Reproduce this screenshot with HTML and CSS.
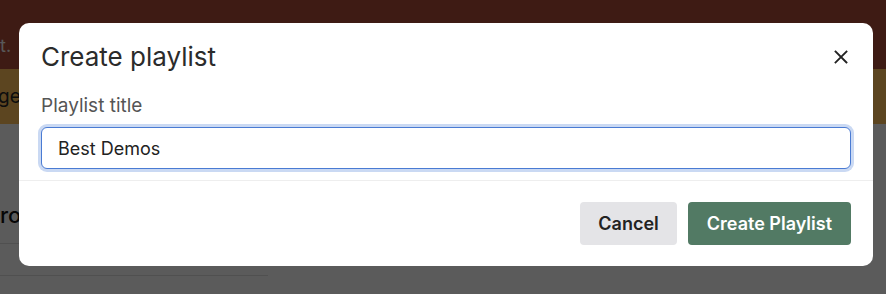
FILE: index.html
```html
<!DOCTYPE html>
<html>
<head>
    <link rel="stylesheet" href="styles.css">
</head>
<body>
    <div class="page">
        <div class="topbar"><span>t.</span></div>
        <div class="banner"><span>ged</span></div>
        <div class="content">
            <div class="section-head"><h2>rog</h2></div>
            <div class="list-row"></div>
        </div>
    </div>

    <div class="overlay">
        <div class="modal">
            <div class="modal-header">
                <h1>Create playlist</h1>
                <button class="close" type="button" aria-label="Close">
                    <svg width="14" height="14" viewBox="0 0 14 14">
                        <path d="M1.5 1.5 L12.5 12.5 M12.5 1.5 L1.5 12.5" stroke="#222" stroke-width="1.8" stroke-linecap="square" fill="none"/>
                    </svg>
                </button>
            </div>
            <div class="modal-body">
                <label class="field">
                    Playlist title
                    <input type="text" class="title-input" value="Best Demos">
                </label>
            </div>
            <div class="modal-footer">
                <button type="button" class="btn btn-cancel">Cancel</button>
                <button type="submit" class="btn btn-create">Create Playlist</button>
            </div>
        </div>
    </div>
</body>
</html>
```

FILE: styles.css
```css
body {
    margin: 0;
    font-family: Inter, "Noto Sans", sans-serif;
    background-color: #e4e4e4;
}
.page {
    width: 886px;
    height: 294px;
    overflow: hidden;
}
.topbar {
    height: 69px;
    background-color: #9c4534;
    color: #ddd;
    font-size: 18px;
    display: flex;
    align-items: center;
}
.topbar span {
    padding-top: 22px;
}
.banner {
    height: 55px;
    background-color: #e6ad52;
    color: #222;
    font-size: 19px;
    display: flex;
    align-items: center;
}
.banner span {
    margin-left: -2px;
}
.content {
    background-color: #e4e4e4;
}
.section-head {
    height: 119px;
    width: 19px;
    display: flex;
    align-items: flex-end;
    border-bottom: 1px solid #c8c8c8;
}
.section-head h2 {
    margin: 0 0 15px 0;
    font-size: 22px;
    font-weight: 500;
    color: #111;
}
.list-row {
    width: 268px;
    height: 31px;
    border-bottom: 1px solid #c8c8c8;
}

.overlay {
    position: fixed;
    top: 0;
    left: 0;
    right: 0;
    bottom: 0;
    background-color: rgba(0, 0, 0, 0.6);
}
.modal {
    margin: 23px 0 0 19px;
    width: 854px;
    background-color: #fff;
    border-radius: 10px;
}
.modal-header {
    display: flex;
    justify-content: space-between;
    align-items: center;
    padding: 18px 21px 0 22px;
}
.modal-header h1 {
    margin: 0;
    font-size: 26px;
    font-weight: 400;
    color: #2b2b2b;
    line-height: 32px;
}
.close {
    background: none;
    border: none;
    padding: 4px;
    cursor: pointer;
    display: flex;
}
.modal-body {
    padding: 22px 22px 11px;
}
.field {
    display: flex;
    flex-direction: column;
    gap: 10px;
    font-size: 19px;
    font-weight: 400;
    line-height: 22px;
    color: #555;
}
.title-input {
    height: 42px;
    box-sizing: border-box;
    padding: 0 16px;
    border: 1px solid #4a7bd3;
    border-radius: 6px;
    box-shadow: 0 0 0 3px #cad9f3;
    font-family: inherit;
    font-size: 18px;
    font-weight: 400;
    color: #222;
    outline: none;
}
.modal-footer {
    border-top: 1px solid #eeeeee;
    display: flex;
    justify-content: flex-end;
    gap: 11px;
    padding: 21px 22px 21px;
}
.btn {
    height: 43px;
    padding: 0 18px;
    border: none;
    border-radius: 4px;
    font-family: inherit;
    font-size: 18px;
    font-weight: 600;
    cursor: pointer;
}
.btn-cancel {
    background-color: #e4e4e7;
    color: #222;
}
.btn-create {
    padding: 0 19px;
    background-color: #527a64;
    color: #fff;
}
```
